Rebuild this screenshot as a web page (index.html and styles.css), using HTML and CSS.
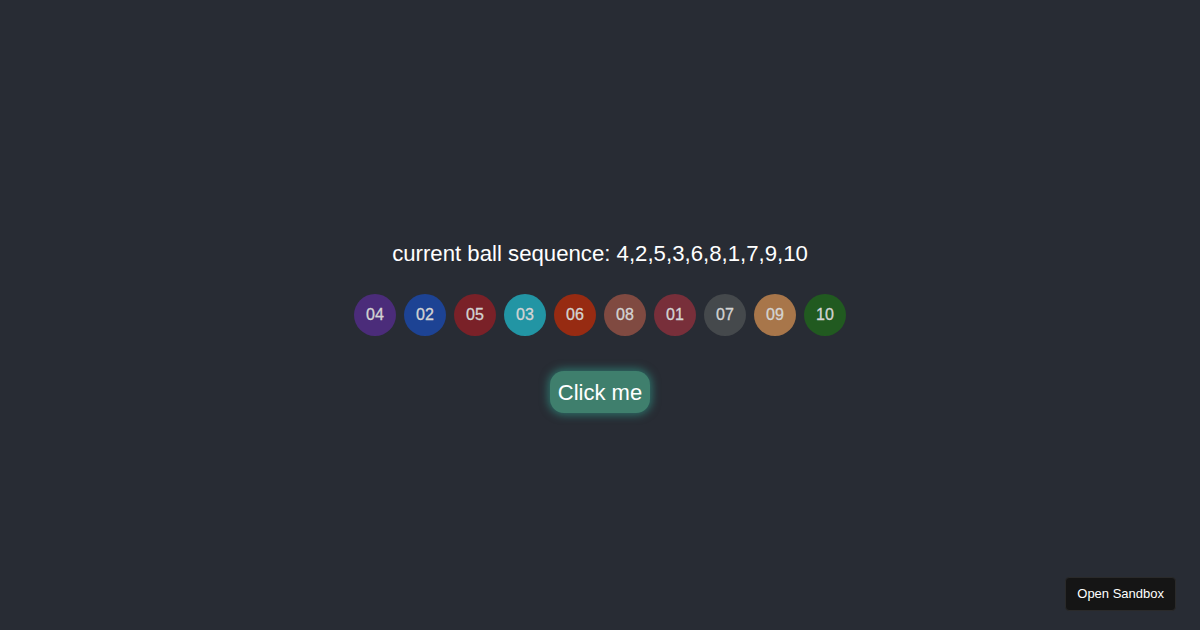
FILE: index.html
```html
<!DOCTYPE html>
<html>
<head>
<meta charset="utf-8">
<link rel="stylesheet" href="styles.css">
</head>
<body>
<main class="app">
  <h1 class="title">current ball sequence: 4,2,5,3,6,8,1,7,9,10</h1>
  <div class="balls">
    <div class="ball b4">04</div>
    <div class="ball b2">02</div>
    <div class="ball b5">05</div>
    <div class="ball b3">03</div>
    <div class="ball b6">06</div>
    <div class="ball b8">08</div>
    <div class="ball b1">01</div>
    <div class="ball b7">07</div>
    <div class="ball b9">09</div>
    <div class="ball b10">10</div>
  </div>
  <button class="btn">Click me</button>
</main>
<a class="sandbox">Open Sandbox</a>
</body>
</html>
```
FILE: styles.css
```css
html, body {
  margin: 0;
  height: 100%;
  background: #282c34;
  font-family: "Liberation Sans", Arial, sans-serif;
  color: #fff;
}
.app {
  height: 100%;
  display: flex;
  flex-direction: column;
  align-items: center;
  padding-top: 241px;
  box-sizing: border-box;
}
.title {
  margin: 0;
  font-size: 22.2px;
  font-weight: normal;
  line-height: 26px;
}
.balls {
  display: flex;
  gap: 8px;
  margin-top: 27px;
}
.ball {
  width: 42px;
  height: 42px;
  border-radius: 50%;
  display: flex;
  align-items: center;
  justify-content: center;
  font-size: 16px;
  color: #d4d4d4;
  -webkit-text-stroke: 0.3px #d4d4d4;
  font-family: "Liberation Sans", Arial, sans-serif;
}
.b4 { background: #4b2c7a; }
.b2 { background: #1d4394; }
.b5 { background: #7a2128; }
.b3 { background: #2295a4; }
.b6 { background: #972b12; }
.b8 { background: #804a41; }
.b1 { background: #782f3a; }
.b7 { background: #45494c; }
.b9 { background: #a8764a; }
.b10 { background: #215a20; }
.btn {
  margin-top: 35px;
  height: 42px;
  padding: 0 8px;
  border: none;
  border-radius: 14px;
  background: #3f7f6d;
  color: #fff;
  font-family: "Liberation Sans", Arial, sans-serif;
  font-size: 22px;
  padding-top: 2px;
  box-shadow: 0 0 8px 2px rgba(50, 170, 150, 0.55);
}
.sandbox {
  position: fixed;
  right: 24px;
  bottom: 19px;
  background: #151515;
  color: #fff;
  font-size: 13px;
  padding: 0 11px;
  height: 32px;
  line-height: 32px;
  border-radius: 4px;
  border: 1px solid #2a2a2a;
}
```
